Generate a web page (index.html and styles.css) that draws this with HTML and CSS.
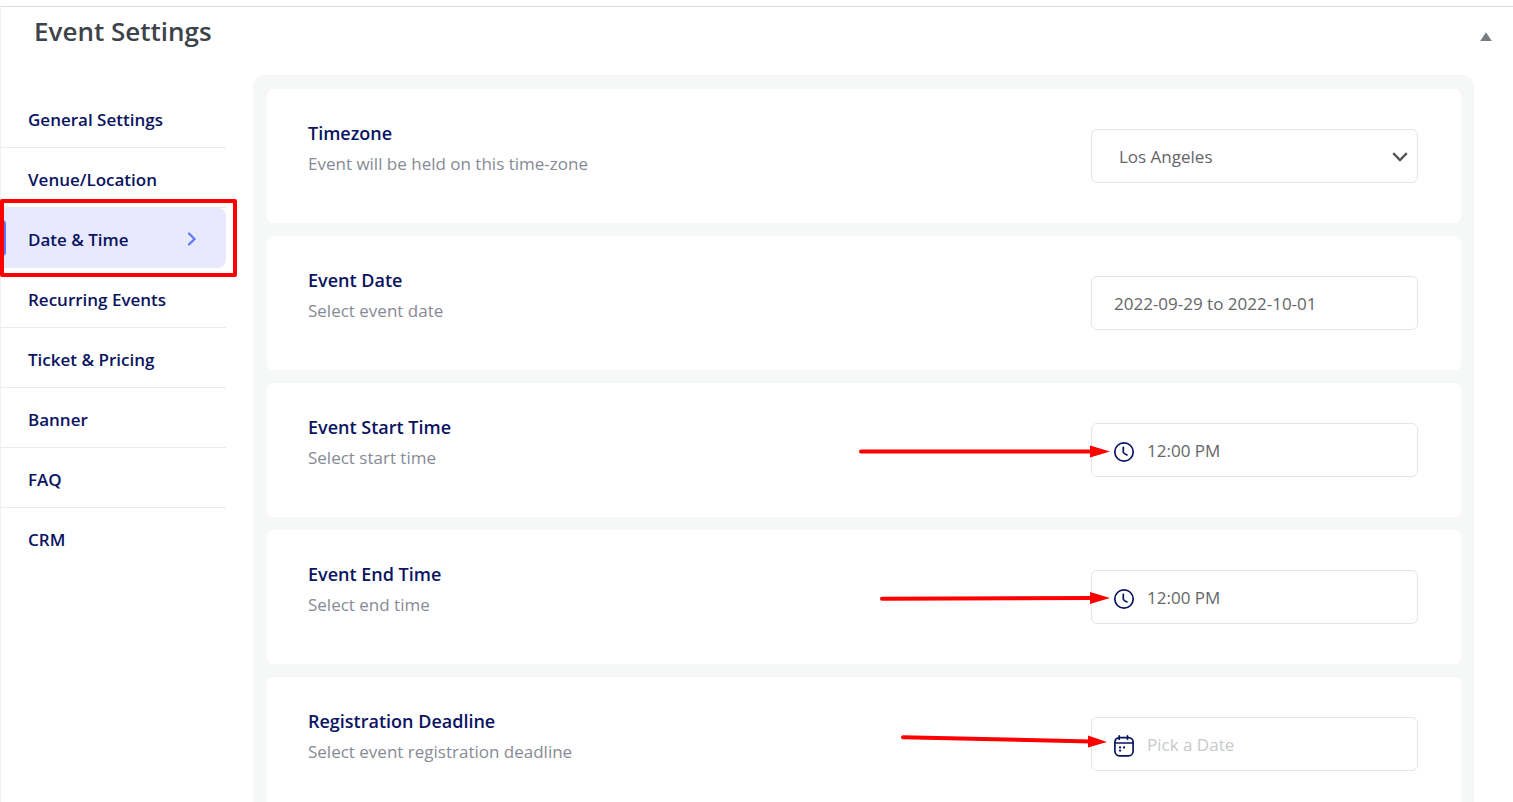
FILE: index.html
```
<!DOCTYPE html>
<html lang="en">
<head>
  <meta charset="UTF-8" />
  <title>Event Settings</title>
  <meta name="viewport" content="width=device-width, initial-scale=1" />
  <link rel="stylesheet" href="styles.css">
</head>
<body>
  <div class="metabox">
    <header class="metabox-header">
      <h1>Event Settings</h1>
      <button class="toggle" type="button" aria-label="Toggle panel">
        <svg width="12" height="9" viewBox="0 0 12 9"><path d="M6 0.3 L11.8 9 H0.2 Z" fill="#787c82" /></svg>
      </button>
    </header>

    <div class="layout">
      <nav class="tabs">
        <a href="#general">General Settings</a>
        <a href="#venue">Venue/Location</a>
        <a href="#date" class="active">
          Date &amp; Time
          <svg class="tab-arrow" width="10" height="14" viewBox="0 0 10 14"><path d="M2 1.5 L7.5 7 L2 12.5" fill="none" stroke="#5d78ff" stroke-width="2.2" stroke-linecap="round" /></svg>
          <span class="highlight"></span>
        </a>
        <a href="#recurring">Recurring Events</a>
        <a href="#ticket">Ticket &amp; Pricing</a>
        <a href="#banner">Banner</a>
        <a href="#faq">FAQ</a>
        <a href="#crm">CRM</a>
      </nav>

      <main class="panel">
        <div class="card">
          <div class="info">
            <label for="timezone">Timezone</label>
            <p>Event will be held on this time-zone</p>
          </div>
          <div class="field">
            <select id="timezone">
              <option>Los Angeles</option>
            </select>
            <svg class="chevron" width="16" height="10" viewBox="0 0 16 10"><path d="M1.2 1.2 L8 8 L14.8 1.2" fill="none" stroke="#555" stroke-width="2.4" /></svg>
          </div>
        </div>

        <div class="card">
          <div class="info">
            <label for="event-date">Event Date</label>
            <p>Select event date</p>
          </div>
          <div class="field">
            <input type="text" id="event-date" value="2022-09-29 to 2022-10-01" />
          </div>
        </div>

        <div class="card">
          <div class="info">
            <label for="start-time">Event Start Time</label>
            <p>Select start time</p>
          </div>
          <div class="field with-icon">
            <input type="text" id="start-time" value="12:00 PM" />
            <svg class="icon" width="22" height="22" viewBox="0 0 22 22" fill="none" stroke="#0a1461" stroke-width="1.7" stroke-linecap="round" stroke-linejoin="round"><circle cx="11" cy="11" r="9.2" /><path d="M10.3 6.3 V11.2 C10.3 12 10.8 12.4 14 13.9" /></svg>
            <svg class="pointer" width="252" height="20" viewBox="0 0 252 20"><path d="M2 10.5 H234" stroke="#f00" stroke-width="4" stroke-linecap="round" /><path d="M231 4.5 L251 10.5 L231 16.5 Z" fill="#f00" /></svg>
          </div>
        </div>

        <div class="card">
          <div class="info">
            <label for="end-time">Event End Time</label>
            <p>Select end time</p>
          </div>
          <div class="field with-icon">
            <input type="text" id="end-time" value="12:00 PM" />
            <svg class="icon" width="22" height="22" viewBox="0 0 22 22" fill="none" stroke="#0a1461" stroke-width="1.7" stroke-linecap="round" stroke-linejoin="round"><circle cx="11" cy="11" r="9.2" /><path d="M10.3 6.3 V11.2 C10.3 12 10.8 12.4 14 13.9" /></svg>
            <svg class="pointer" width="252" height="20" viewBox="0 0 252 20"><path d="M23 10.7 L234 10" stroke="#f00" stroke-width="4" stroke-linecap="round" /><path d="M231 4 L251 10 L231 16 Z" fill="#f00" /></svg>
          </div>
        </div>

        <div class="card">
          <div class="info">
            <label for="deadline">Registration Deadline</label>
            <p>Select event registration deadline</p>
          </div>
          <div class="field with-icon">
            <input type="text" id="deadline" placeholder="Pick a Date" />
            <svg class="icon" width="22" height="22" viewBox="0 0 22 22" fill="none" stroke="#0a1461" stroke-width="1.7" stroke-linecap="round"><rect x="1.9" y="2.6" width="18.2" height="18.2" rx="4.5" /><path d="M2.2 8 H19.8 M6.2 0.9 V4.2 M14.5 0.9 V4.2" /><path d="M7 12.4 h0.1 M11 12.4 h0.1 M7 15.6 h0.1" stroke-width="2.2" /></svg>
            <svg class="pointer" width="252" height="20" viewBox="0 0 252 20"><path d="M44 2.2 L232 6.5" stroke="#f00" stroke-width="4" stroke-linecap="round" /><path d="M229 0.5 L248 7 L229 12.5 Z" fill="#f00" /></svg>
          </div>
        </div>
      </main>
    </div>
  </div>
</body>
</html>
```

FILE: styles.css
```
* {
  box-sizing: border-box;
}
body {
  margin: 0;
  height: 100vh;
  overflow: hidden;
  padding-top: 6px;
  background: #fff;
  font-family: 'Open Sans', 'Noto Sans', sans-serif;
  font-size: 17px;
  color: #0a1461;
}
.metabox {
  border-top: 1px solid #dcdcde;
  border-left: 1px solid #f0f0f1;
}
.metabox-header {
  display: flex;
  justify-content: space-between;
  align-items: flex-start;
  height: 50px;
  padding: 0 21px 0 33px;
}
h1 {
  margin: 0;
  font-size: 26px;
  line-height: 48px;
  font-weight: 600;
  color: #3c434a;
}
.toggle {
  display: flex;
  margin-top: 25px;
  padding: 0;
  border: 0;
  background: none;
}

/* Side tabs */
.layout {
  display: flex;
  align-items: flex-start;
  gap: 27px;
  padding: 18px 39px 0 0;
}
.tabs {
  flex: 0 0 225px;
  padding-top: 13px;
}
.tabs a {
  position: relative;
  display: flex;
  align-items: center;
  justify-content: space-between;
  height: 60px;
  padding: 3px 29px 0 27px;
  border-bottom: 1px solid #e9eaee;
  color: #0a1461;
  font-weight: 600;
  text-decoration: none;
}
.tabs a:last-child {
  border-bottom: 0;
}
.tabs a.active {
  background: #e8e9fe;
  border-radius: 0 8px 8px 0;
}
.tabs a.active::before {
  content: '';
  position: absolute;
  left: 0;
  top: 12px;
  width: 5px;
  height: 36px;
  border-radius: 0 4px 4px 0;
  background: #5d78ff;
}
.highlight {
  position: absolute;
  top: -9px;
  left: -1px;
  right: -11px;
  bottom: -10px;
  border: 4px solid #f00;
  border-radius: 2px;
}

/* Settings cards */
.panel {
  flex: 1;
  display: flex;
  flex-direction: column;
  gap: 13px;
  padding: 14px 13px 14px 14px;
  border-radius: 12px;
  background: #f5f8f7;
}
.card {
  display: flex;
  justify-content: space-between;
  align-items: flex-start;
  min-height: 134px;
  padding: 32px 43px 31px 41px;
  border-radius: 6px;
  background: #fff;
}
.info label {
  display: block;
  font-size: 18px;
  line-height: 24px;
  font-weight: 600;
}
.info p {
  margin: 7px 0 0;
  line-height: 24px;
  color: #878a95;
}
.field {
  position: relative;
  flex: 0 0 327px;
  margin-top: 8px;
}
.field input,
.field select {
  display: block;
  width: 100%;
  height: 54px;
  padding: 0 22px;
  border: 1px solid #e4e5e9;
  border-radius: 6px;
  background: #fff;
  font: inherit;
  color: #646669;
  appearance: none;
}
.field select {
  padding-left: 27px;
}
.field.with-icon input {
  padding-left: 55px;
}
.field input::placeholder {
  color: #c8c9cc;
  opacity: 1;
}
.chevron {
  position: absolute;
  top: 23px;
  right: 10px;
  pointer-events: none;
}
.icon {
  position: absolute;
  top: 18px;
  left: 22px;
}
.pointer {
  position: absolute;
  top: 18px;
  right: calc(100% - 20px);
}
```
